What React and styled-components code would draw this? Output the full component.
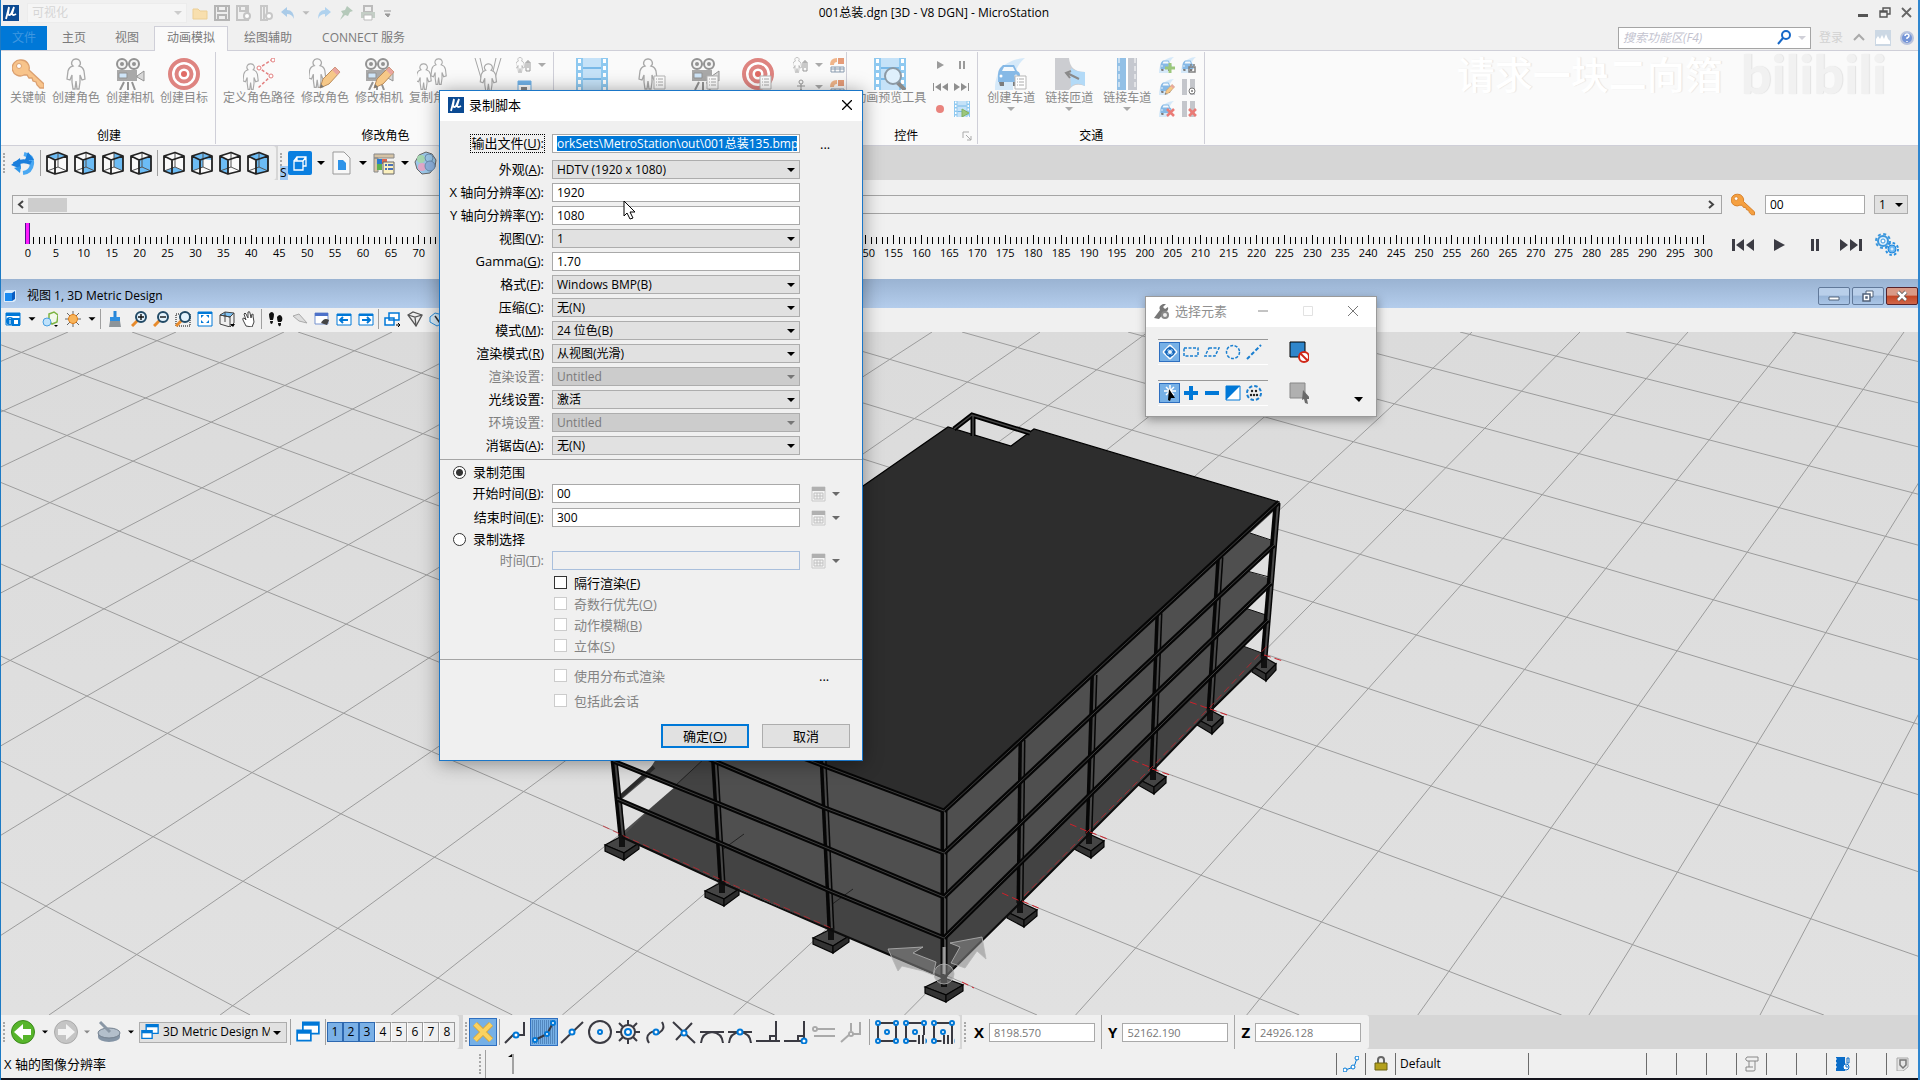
import { Fragment } from 'react'
import styled, { createGlobalStyle, css } from 'styled-components'

const GlobalStyle = createGlobalStyle`
  * {
    box-sizing: border-box;
  }

  body {
    background: #f0f0f0;
    color: #000;
    font-family: 'Open Sans', 'Noto Sans CJK SC', sans-serif;
    font-size: 12px;
    line-height: 16px;
    margin: 0;
  }

  button, input, select {
    color: inherit;
    font: inherit;
    margin: 0;
    padding: 0;
  }

  svg {
    display: block;
    flex: none;
  }
`

const BLUE = '#0078d7'

/* ---------- shared parts ---------- */

const Window = styled.div`
  border-left: 1px solid #1c7ac4;
  border-right: 2px solid #2f86cf;
  display: flex;
  flex-direction: column;
  min-height: 100vh;
  overflow: hidden;
  position: relative;
`

const ToolButton = styled.button`
  align-items: center;
  background: ${props => props.$active ? '#76b0e6' : 'none'};
  border: ${props => props.$active ? '1px solid #2e6fc0' : '0'};
  display: flex;
  flex: none;
  height: ${props => props.$h || 22}px;
  justify-content: center;
  width: ${props => props.$w || 22}px;
`

const Grip = styled.span`
  border-left: 2px dotted #a8a8a8;
  flex: none;
  height: ${props => props.$h || 20}px;
  margin: 0 2px;
  width: 2px;
`

const Rule = styled.span`
  background: #a0a0a0;
  flex: none;
  height: ${props => props.$h || 26}px;
  margin: 0 ${props => props.$gap || 2}px;
  width: 1px;
`

const Caret = ({ color = '#000', w = 16 }) => (
  <svg width={w} height='6' viewBox='0 0 16 6'><path d='M4 1h8l-4 4z' fill={color} /></svg>
)

const Icon = ({ w = 16, h, box, children }) => (
  <svg width={w} height={h || w} viewBox={box || `0 0 ${w} ${h || w}`} fill='none'>{children}</svg>
)

const dropArrow = css`
  &::after {
    border: 4px solid transparent;
    border-bottom: 0;
    border-top-color: ${props => props.$off ? '#777' : '#000'};
    content: '';
    pointer-events: none;
    position: absolute;
    right: 5px;
    top: 8px;
  }
`

const Drop = styled.div`
  ${dropArrow}
  display: flex;
  height: 19px;
  position: relative;

  select {
    appearance: none;
    background: ${props => props.$off ? '#cccccc' : '#e1e1e1'};
    border: 1px solid #adadad;
    border-radius: 0;
    color: ${props => props.$off ? '#7a7a7a' : '#000'};
    height: 19px;
    line-height: 16px;
    opacity: 1;
    padding: 0 16px 0 4px;
    width: 100%;
  }
`

const TextBox = styled.input`
  background: #fff;
  border: 1px solid #a9a9a9;
  height: 19px;
  min-width: 0;
  padding: 0 4px;

  &:disabled {
    background: #f0f0f0;
    border-color: #a9bfdc;
  }
`

/* ---------- icons ---------- */

const MuLogo = ({ size = 16 }) => (
  <Icon w={size} box='0 0 16 16'>
    <rect width='16' height='16' fill='#0b4a92' />
    <path d='M6 2 3 14M6 2 5 9q1 2 3 0l3-7-2 7q1 2 4 0' stroke='#fff' strokeWidth='1.8' />
  </Icon>
)

const personPath = 'M16 1a4 4 0 0 1 3 7q4 1 5 5l1 8-3 1-2-5v7l-1 7h-2l-1-8-1 8h-2l-1-7v-7l-2 5-3-1 1-8q1-4 5-5a4 4 0 0 1 3-7z'

const Person = ({ x = 0, y = 0, s = 1 }) => (
  <path d={personPath} transform={`translate(${x} ${y}) scale(${s})`} fill='#fafafa' stroke='#a9a9a9' strokeWidth='1.3' />
)

const Pencil = ({ x = 0, y = 0, s = 1 }) => (
  <g transform={`translate(${x} ${y}) scale(${s})`}>
    <path d='m2 22 3-9L17 1l5 5L11 18z' fill='#f6c888' stroke='#b98c5c' />
    <path d='m17 1 5 5-3 3-5-5z' fill='#e9a5a0' />
    <path d='m2 22 1-4 3 3z' fill='#777' />
  </g>
)

const CameraShape = () => (
  <g stroke='#939393' strokeWidth='2'>
    <circle cx='8' cy='6' r='5' fill='#f3f3f3' />
    <circle cx='20' cy='6' r='5' fill='#f3f3f3' />
    <circle cx='8' cy='6' r='1' /><circle cx='20' cy='6' r='1' />
    <path d='M3 12h20v11H3z' fill='#a9a9a9' stroke='none' />
    <path d='M5 15h8v5H5z' fill='#cfe5f8' strokeWidth='1' />
    <path d='m23 18 7-5v10l-7-4z' fill='#d8d8d8' strokeWidth='1' />
    <path d='m10 24-4 8M14 24v8M18 24l3 8' />
  </g>
)

const ListBadge = ({ x = 18, y = 18 }) => (
  <g transform={`translate(${x} ${y})`}>
    <path d='M0 0h11v13H0z' fill='#fff' stroke='#b5b5b5' />
    <path d='M2 3h1m1 0h5M2 6h1m1 0h5M2 9h1m1 0h5' stroke='#aaa' />
  </g>
)

const FilmShape = () => (
  <g>
    <path d='M0 0h32v32H0z' fill='#8fc9f0' />
    <path d='M7 0h18v32H7z' fill='#c5e2f8' />
    <path d='M7 10h18M7 21h18' stroke='#79b9e8' strokeWidth='2' />
    <path d='M2 1h3v4H2zm0 7h3v4H2zm0 7h3v4H2zm0 7h3v4H2zm0 7h3v3H2zM27 1h3v4h-3zm0 7h3v4h-3zm0 7h3v4h-3zm0 7h3v4h-3zm0 7h3v3h-3z' fill='#fff' />
  </g>
)

const CarShape = () => (
  <g>
    <path d='M0 32C0 14 8 2 30 0 20 8 18 20 18 32z' fill='#d5e9f9' />
    <path d='m5 10 3-3h11l3 6q3 1 3 4v7H3v-8q0-3 2-6z' fill='#86b9e6' />
    <path d='m7 13 2-4h9l2 4z' fill='#f4f9fd' />
    <path d='M4 24h5v4H5zm14 0h5l-1 4h-4z' fill='#7c7c7c' />
    <circle cx='6' cy='18' r='1.5' fill='#fff' /><circle cx='21' cy='18' r='1.5' fill='#fff' />
  </g>
)

const KeyShape = ({ fill = '#f8c48b', line = '#dba070' }) => (
  <g>
    <path d='M9 2a8 8 0 1 0 3 15l3 0 2 3 3 0 1 3 3 1 1 3 3 3h4v-4L17 12A8 8 0 0 0 9 2z' fill={fill} stroke={line} strokeWidth='1.3' />
    <circle cx='7' cy='8' r='2.5' fill='#fff' stroke={line} />
  </g>
)

const TargetShape = () => (
  <g>
    <circle cx='16' cy='16' r='14' fill='#fff' stroke='#de8480' strokeWidth='4' />
    <circle cx='16' cy='16' r='7.5' stroke='#de8480' strokeWidth='4' />
    <circle cx='16' cy='16' r='3' fill='#e06c66' />
  </g>
)

const RIBBON_ICONS = {
  key: <KeyShape />,
  person: <Person />,
  camera: <CameraShape />,
  target: <TargetShape />,
  path: (
    <>
      <Person x={-6} y={5} s={0.85} />
      <path d='m30 1-14 9 12 8-13 12' stroke='#e27f7f' strokeWidth='1.5' strokeDasharray='3 2' />
      <circle cx='30' cy='2' r='2' fill='#fff' stroke='#e27f7f' />
      <circle cx='16' cy='10' r='2' fill='#fff' stroke='#e27f7f' />
      <circle cx='28' cy='18' r='2' fill='#fff' stroke='#e27f7f' />
    </>
  ),
  personEdit: <><Person x={-7} s={0.95} /><Pencil x={9} y={8} /></>,
  cameraEdit: <><CameraShape /><Pencil x={9} y={8} /></>,
  copy: <><Person x={-7} y={5} s={0.85} /><Person x={8} s={0.85} /></>,
  puppet: <><path d='m3 0 6 20M8 0l4 18M29 0l-6 20M24 0l-4 18' stroke='#a5a5a5' /><Person y={5} s={0.9} x={2} /></>,
  film: <FilmShape />,
  personList: <><Person x={-4} /><ListBadge /></>,
  cameraList: <><CameraShape /><ListBadge /></>,
  targetList: <><TargetShape /><ListBadge /></>,
  preview: (
    <>
      <FilmShape />
      <path d='m23 24 8 8' stroke='#8b8b8b' strokeWidth='4' />
      <circle cx='19' cy='18' r='8' fill='#dff0fc' stroke='#8c9aa5' strokeWidth='2' />
    </>
  ),
  car: <><CarShape /><ListBadge x={20} y={18} /></>,
  ramp: (
    <>
      <path d='M2 0h14q1 14 16 14v14q-11-4-16 4H2z' fill='#cccdd1' />
      <path d='M32 14v14q-9-5-14 1-1-14 0-19 5 4 14 4z' fill='#b3daf7' />
      <path d='m26 21-12-6m4-2-5 2 4 5' stroke='#8a8a8a' strokeWidth='2' />
    </>
  ),
  road: (
    <>
      <path d='M6 0h20v32H6z' fill='#c5c8cf' />
      <path d='M6 0h10v32H6z' fill='#92c0e6' />
      <path d='M16 0v32' stroke='#fff' strokeWidth='2' /><path d='M8 0v32M24 0v32' stroke='#fff' strokeDasharray='5 3' />
    </>
  )
}

const half = shape => <g transform='scale(0.5)'>{shape}</g>

const SMALL_ICONS = {
  play: <path d='M5 4v8l7-4z' fill='#9b9b9b' />,
  pause: <path d='M5 4h2v8H5zm4 0h2v8H9z' fill='#9b9b9b' />,
  first: <path d='M1 4h1v8H1zm8 0v8L3 8zm7 0v8l-6-4z' fill='#8f8f8f' />,
  last: <path d='M15 4h-1v8h1zM7 4v8l6-4zM0 4v8l6-4z' fill='#8f8f8f' />,
  record: <circle cx='8' cy='8' r='4' fill='#e9837d' />,
  filmPlay: <>{half(<FilmShape />)}<path d='M8 8v8l7-4z' fill='#9cc77c' stroke='#82b060' /></>,
  carAdd: <>{half(<CarShape />)}<path d='M11 6v10M6 11h10' stroke='#9cc77c' strokeWidth='3' /></>,
  carCam: <>{half(<CarShape />)}<path d='M8 10h6v5H8zM9 8h2m1 0h2' stroke='#808080' strokeWidth='1.5' /></>,
  carEdit: <>{half(<CarShape />)}<Pencil x={5} y={5} s={0.48} /></>,
  carDel: <>{half(<CarShape />)}<path d='m8 8 7 7m0-7-7 7' stroke='#ea7b76' strokeWidth='2.5' /></>,
  roadEye: <><path d='M1 0h5v16H1zm8 0h5v16H9z' fill='#c4c6cb' /><circle cx='11' cy='12' r='3' fill='#fff' stroke='#777' /><circle cx='11' cy='12' r='1' fill='#777' /></>,
  roadDel: <><path d='M1 0h5v16H1zm8 0h5v16H9z' fill='#c4c6cb' /><path d='m8 8 7 7m0-7-7 7' stroke='#ea7b76' strokeWidth='2.5' /></>,
  clip: <><Person x={-4} s={0.5} /><path d='M10 5h4v9h-4zM12 3v8' stroke='#999' /></>,
  cal: <><path d='M2 2h13v12H2z' fill='#fff' stroke='#6fb0e6' /><path d='M2 2h13v4H2z' fill='#6fb0e6' /><path d='M5 8h6v5H5z' fill='#888' /></>,
  walk: <><circle cx='8' cy='3' r='2' stroke='#999' /><path d='M8 5v5l-3 5m3-5 3 5M4 7h8' stroke='#999' /></>,
  chart: <><path d='M1 8q0-7 7-7v4q-3 0-3 3z' fill='#f0b58a' /><path d='M9 1h6v6H9z' fill='#e59c79' /><path d='M2 10h13v5H2zM2 12h13M6 10v5M11 10v5' stroke='#8a9cb0' /></>
}

/* ---------- title bar ---------- */

const TitleBar = styled.header`
  align-items: center;
  display: grid;
  grid-template-columns: 16fr auto 17fr;
  height: 26px;
`

const QuickAccess = styled.div`
  align-items: center;
  display: flex;
  padding-left: 2px;
`

const Workflow = styled.div`
  ${dropArrow}
  margin: 0 2px 0 8px;
  position: relative;

  &::after {
    border-top-color: #ccc;
  }

  select {
    appearance: none;
    background: #f5f5f5;
    border: 1px solid #ececec;
    color: #d5d5d5;
    height: 20px;
    opacity: 1;
    padding: 0 4px;
    width: 160px;
  }
`

const WindowTitle = styled.h1`
  font-size: 12px;
  font-weight: 400;
  margin: 0;
`

const WindowControls = styled.div`
  display: flex;
  justify-content: flex-end;
`

const QUICK = [
  ['打开', <path key='a' d='M1 4h5l2 2h7v8H1z' fill='#f8dfae' stroke='#eccf95' />],
  ['保存', <path key='a' d='M1 1h14v14H1zM4 1v5h8V1M4 15v-5h8v5' fill='#eee' stroke='#b5b5b5' strokeWidth='2' />],
  ['保存设置', <g key='a' stroke='#c4c4c4' strokeWidth='2'><path d='M1 1h11v14H1zM4 1v5h6V1' /><circle cx='11' cy='11' r='3' fill='#fff' /></g>],
  ['压缩', <g key='a' stroke='#c8c8c8' strokeWidth='2'><path d='M3 1h6v14H3zM6 1v14' /><circle cx='11' cy='11' r='3' fill='#fff' /></g>],
  ['撤销', <path key='a' d='M1 7l6-5v3q7 0 7 9-2-5-7-5v3z' fill='#aacbe8' />],
  null,
  ['重做', <path key='a' d='M15 7 9 2v3q-7 0-7 9 2-5 7-5v3z' fill='#b0d2ee' />],
  ['固定', <path key='a' d='m9 1 6 5-3 1-2 4-3-1-5 5 3-6-2-3 4-1z' fill='#b5c9ba' />],
  ['打印', <g key='a'><path d='M4 1h8v6H4z' stroke='#bbb' strokeWidth='2' /><path d='M1 7h14v6H1z' fill='#c4cec6' /><path d='M4 10h8v5H4z' fill='#fff' stroke='#bbb' /></g>]
]

const AppTitleBar = () => (
  <TitleBar>
    <QuickAccess>
      <MuLogo />
      <Workflow>
        <select aria-label='工作流' defaultValue='可视化' disabled><option>可视化</option></select>
      </Workflow>
      {QUICK.map((item, i) => item
        ? <ToolButton key={i} aria-label={item[0]}><Icon>{item[1]}</Icon></ToolButton>
        : <Caret key={i} color='#bbb' w={14} />
      )}
      <Icon w={16}><path d='M5 6h7M6 9h5l-2 3z' stroke='#999' fill='#999' /></Icon>
    </QuickAccess>
    <WindowTitle>001总装.dgn [3D - V8 DGN] - MicroStation</WindowTitle>
    <WindowControls>
      <ToolButton aria-label='最小化'><Icon><path d='M3 9h10v3H3z' fill='#555' /></Icon></ToolButton>
      <ToolButton aria-label='还原'><Icon><path d='M3 6h7v6H3zM6 6V3h7v6h-3M3 7h7' stroke='#555' strokeWidth='1.4' /></Icon></ToolButton>
      <ToolButton aria-label='关闭'><Icon><path d='m3 3 9 9m0-9-9 9' stroke='#666' strokeWidth='1.8' /></Icon></ToolButton>
    </WindowControls>
  </TitleBar>
)

/* ---------- ribbon ---------- */

const TabBar = styled.nav`
  align-items: stretch;
  border-bottom: 1px solid #cfcfd8;
  display: flex;
  height: 25px;
`

const Tab = styled.a`
  background: ${props => props.$file ? BLUE : props.$on ? '#fafafa' : 'none'};
  border: 1px solid ${props => props.$on ? '#cfcfd8' : 'transparent'};
  border-bottom: 0;
  color: ${props => props.$file ? '#3f97e0' : '#7a7a7a'};
  height: ${props => props.$on ? 25 : 24}px;
  line-height: 22px;
  margin-right: ${props => props.$after || 0}px;
  padding: 0 ${props => props.$pad || 12}px;
  text-decoration: none;
`

const TabTools = styled.div`
  align-items: center;
  display: flex;
  margin-left: auto;
`

const Search = styled.div`
  align-items: center;
  background: #fff;
  border: 1px solid #a5a5a5;
  display: flex;
  height: 22px;
  margin-right: 8px;
  width: 193px;

  input {
    background: none;
    border: 0;
    flex: 1;
    font-style: italic;
    min-width: 0;
    padding-left: 4px;
  }

  input::placeholder {
    color: #c3c3cf;
  }
`

const SignIn = styled.a`
  color: #d2d2d2;
  margin-right: 5px;
  text-decoration: none;
`

const Panels = styled.section`
  background: #fafafa;
  border-bottom: 1px solid #cfcfd8;
  display: flex;
  height: 95px;
`

const Group = styled.div`
  border-right: 1px solid #cfcfd8;
  display: flex;
  flex: none;
  flex-direction: column;
  justify-content: space-between;
  margin: 1px 0;
  padding: ${props => props.$pad || '6px 4px 0 6px'};
`

const GroupFooter = styled.footer`
  align-items: center;
  display: flex;

  h2 {
    flex: 1;
    font-size: 12px;
    font-weight: 400;
    margin: 0;
    text-align: center;
  }
`

const GroupBody = styled.div`
  display: flex;
`

const BigButton = styled.button`
  align-items: center;
  background: none;
  border: 0;
  color: #8a8a8a;
  display: flex;
  flex-direction: column;
  min-width: ${props => props.$w || 42}px;
  padding: 0 ${props => props.$pad || 3}px;
  white-space: nowrap;
`

const SmallGrid = styled.div`
  align-content: start;
  display: grid;
  grid-template-columns: repeat(${props => props.$cols || 2}, ${props => props.$tight ? 18 : 22}px);
  grid-template-rows: repeat(3, 22px);
  justify-items: center;
  margin-top: -4px;
`

const Big = ({ icon, label, w, pad, menu }) => (
  <BigButton $w={w} $pad={pad} aria-label={label ? undefined : icon}>
    <Icon w={32}>{RIBBON_ICONS[icon]}</Icon>
    {label && <span>{label}</span>}
    {menu && <Caret color='#aaa' />}
  </BigButton>
)

const Smalls = ({ icons, cols, tight }) => (
  <SmallGrid $cols={cols} $tight={tight}>
    {icons.map((name, i) => name === 'caret'
      ? <ToolButton key={i} $w={18} aria-label='更多'><Caret color='#aaa' /></ToolButton>
      : <ToolButton key={i} $w={18} aria-label={name}><Icon>{SMALL_ICONS[name]}</Icon></ToolButton>
    )}
  </SmallGrid>
)

const Ribbon = () => (
  <>
    <TabBar>
      <Tab href='#file' $file $pad={10}>文件</Tab>
      <Tab href='#home' $pad={14} $after={1}>主页</Tab>
      <Tab href='#view' $pad={12} $after={2}>视图</Tab>
      <Tab href='#animate' $on>动画模拟</Tab>
      <Tab href='#aids' $pad={15}>绘图辅助</Tab>
      <Tab href='#connect' $pad={13}>CONNECT 服务</Tab>
      <TabTools>
        <Search>
          <input aria-label='搜索功能区' placeholder='搜索功能区(F4)' />
          <Icon w={20} h={18}><circle cx='12' cy='6' r='4' stroke='#1668c8' strokeWidth='2' /><path d='m9 9-5 6' stroke='#1668c8' strokeWidth='2' /></Icon>
          <Caret color='#d0d0d8' w={16} />
        </Search>
        <SignIn href='#signin'>登录</SignIn>
        <Icon w={22} h={16}><path d='m6 10 5-5 5 5' stroke='#aaa' strokeWidth='2' /></Icon>
        <ToolButton aria-label='社区' $w={26} $h={22}>
          <Icon w={16}><rect width='16' height='16' fill='#ccd8e4' /><path d='M1 14V9l2-3 2 3 2-4 2 4 2-5 2 5 2 2v3z' fill='#fff' /></Icon>
        </ToolButton>
        <ToolButton aria-label='帮助' $w={22}>
          <Icon w={14}><circle cx='7' cy='7' r='6' fill='#7595d8' stroke='#b8c3dd' strokeWidth='2' /><path d='M5 5q0-2 2-2t2 2q0 1-2 2v1m0 2v1' stroke='#fff' strokeWidth='1.5' /></Icon>
        </ToolButton>
      </TabTools>
    </TabBar>
    <Panels>
      <Group>
        <GroupBody>
          <Big icon='key' label='关键帧' />
          <Big icon='person' label='创建角色' />
          <Big icon='camera' label='创建相机' />
          <Big icon='target' label='创建目标' />
        </GroupBody>
        <GroupFooter><h2>创建</h2></GroupFooter>
      </Group>
      <Group $pad='6px 2px 0 4px'>
        <GroupBody>
          <Big icon='path' label='定义角色路径' />
          <Big icon='personEdit' label='修改角色' />
          <Big icon='cameraEdit' label='修改相机' />
          <Big icon='copy' label='复制角色' />
          <Big icon='puppet' w={55} />
          <Smalls icons={['clip', 'caret', 'cal']} tight />
        </GroupBody>
        <GroupFooter><h2>修改角色</h2></GroupFooter>
      </Group>
      <Group $pad='6px 0 0 12px'>
        <GroupBody>
          <Big icon='film' w={52} />
          <Big icon='personList' w={68} />
          <Big icon='cameraList' w={38} />
          <Big icon='targetList' w={68} />
          <Smalls icons={['clip', 'caret', 'chart', 'walk', 'caret', 'chart']} cols={3} tight />
        </GroupBody>
      </Group>
      <Group $pad='6px 4px 0 4px'>
        <GroupBody>
          <Big icon='preview' label='动画预览工具' />
          <Smalls icons={['play', 'pause', 'first', 'last', 'record', 'filmPlay']} />
        </GroupBody>
        <GroupFooter>
          <h2>控件</h2>
          <Icon w={12}><path d='M2 8V2h6M5 5l5 5m0-4v4H6' stroke='#aaa' /></Icon>
        </GroupFooter>
      </Group>
      <Group $pad='6px 4px 0 4px'>
        <GroupBody>
          <Big icon='car' label='创建车道' pad={5} menu />
          <Big icon='ramp' label='链接匝道' pad={5} menu />
          <Big icon='road' label='链接车道' pad={5} menu />
          <Smalls icons={['carAdd', 'carCam', 'carEdit', 'roadEye', 'carDel', 'roadDel']} />
        </GroupBody>
        <GroupFooter><h2>交通</h2></GroupFooter>
      </Group>
    </Panels>
  </>
)

const Watermark = styled.div`
  align-items: center;
  color: #fff;
  display: flex;
  font-size: 38px;
  font-weight: 500;
  gap: 18px;
  line-height: 48px;
  pointer-events: none;
  position: absolute;
  right: 32px;
  text-shadow: 1px 0 1px #e2e2e2;
  top: 50px;

  b {
    color: #f1f1f1;
    font-family: Lato, sans-serif;
    font-size: 54px;
    font-weight: 900;
  }
`

/* ---------- view attribute strip ---------- */

const Band = styled.div`
  background: #d6d6d6;
  display: flex;
  height: 34px;
`

const Strip = styled.div`
  align-items: center;
  background: #f0f0f0;
  border-radius: 0 3px 3px 0;
  display: flex;
  flex: none;
  height: 100%;
  margin-right: ${props => props.$after || 2}px;
  padding-right: ${props => props.$end || 2}px;
`

const CUBE_FACES = [
  'M2 5 9 8l13-3-9-3z', 'M10 9 22 6v14l-12 3z', 'M13 2l9 3v15l-9-4z', 'M10 9l12-4v15l-12 3z',
  'M2 20 13 16l9 4-12 3z', 'M2 5 13 2v14L2 20zM13 2l9 3v4l-9-1z', 'M2 5l8 4v14l-8-3z', 'M2 5 13 2l9 3v15l-12 3V9z'
]

const Cube = ({ face }) => (
  <Icon w={24}>
    <path d='M2 5 13 1.5l9 3.5v15l-12 3-8-3z' fill='#fafafa' />
    <path d={face} fill='#6cbcf5' />
    <path d='M2 20 13 16l9 4M13 2v14' stroke='#555' />
    <path d='M2 5 13 1.5l9 3.5v15l-12 3-8-3zM2 5l8 4 12-4M10 9v14' stroke='#222' strokeWidth='1.8' strokeLinejoin='round' />
  </Icon>
)

const SmallTag = styled.span`
  align-self: flex-end;
  background: #9fc8f2;
  font-size: 12px;
  line-height: 14px;
  margin-left: -4px;
  width: 8px;
`

const AttributeStrip = () => (
  <Band>
    <Strip $end={4}>
      <Grip />
      <ToolButton aria-label='旋转' $w={31}>
        <Icon w={24}>
          <path d='M13 3q9 2 8 10-1 8-9 9' stroke='#4aa8f2' strokeWidth='4' />
          <path d='M3 13q9-5 17-1' stroke='#1b7fdc' strokeWidth='4' />
          <path d='m0 14 9-7 1 11zM14 9l3-8 6 8z' fill='#1b7fdc' />
          <path d='m3 17 7-2-1 7z' fill='#2f97ea' />
        </Icon>
      </ToolButton>
      <Rule />
      {CUBE_FACES.map((face, i) => (
        <Fragment key={face}>
          {i === 4 && <Rule />}
          <ToolButton $w={28} $h={28} aria-label={`视图 ${i + 1}`}><Cube face={face} /></ToolButton>
        </Fragment>
      ))}
    </Strip>
    <Strip>
      <Grip />
      <SmallTag>S</SmallTag>
      <Icon w={24}><rect width='24' height='24' rx='2' fill='#0a7fe0' /><path d='M6 10h9v9H6zM9 10V6h9v9h-3M15 10l3-4M6 10l3-4' stroke='#fff' strokeWidth='1.3' /></Icon>
      <Caret w={18} />
      <Icon w={24}><path d='M3 1h11l6 6v16H3z' fill='#f8f8f8' stroke='#999' /><path d='M8 9h5l3 3v7H8z' fill='#2e93e8' /></Icon>
      <Caret w={18} />
      <Icon w={24}><path d='M2 3h20v4H2zM2 7h4v14H2z' fill='#d5c3a5' stroke='#888' /><path d='M5 8h5v5H5z' fill='#2b7bd0' /><path d='M5 13h5v6H5z' fill='#5db04e' /><path d='M10 8h5v5h-5z' fill='#e1674c' /><path d='M11 11h11v12H11z' fill='#fbf0be' stroke='#666' /><path d='M13 14h2m1 0h5m-8 4h2m1 0h5' stroke='#4970b8' strokeWidth='2' /></Icon>
      <Caret w={18} />
      <Icon w={24}>
        <path d='m12 1 6 2 4 6-1 7-5 6-8 1-5-5-2-7 4-7z' fill='#9cc8ea' stroke='#666' />
        <circle cx='7' cy='8' r='4' fill='#a6d7b1' /><circle cx='15' cy='7' r='4' fill='#9cc8ea' stroke='#6c8eb0' />
        <circle cx='8' cy='16' r='4' fill='#e2a8c9' /><circle cx='16' cy='15' r='5' fill='#8fb3e0' stroke='#6c8eb0' />
      </Icon>
    </Strip>
  </Band>
)

/* ---------- timeline ---------- */

const Timeline = styled.section`
  background: #f0f0f0;
  display: flex;
  height: 99px;
  padding-top: 15px;
`

const Track = styled.div`
  flex: 1;
  margin-left: 11px;
`

const ScrollBar = styled.div`
  align-items: center;
  border: 1px solid #a5a5a5;
  display: flex;
  height: 19px;
  justify-content: space-between;
`

const Thumb = styled.span`
  background: #cdcdcd;
  height: 14px;
  margin-right: auto;
  width: 39px;
`

const Ruler = styled.div`
  display: flex;
  margin: 21px 5px 0 2px;
`

const RulerCell = styled.div`
  display: flex;
  flex: 1 1 0;
  flex-direction: column;
  min-width: 0;
  position: relative;
`

const Ticks = styled.div`
  align-items: flex-end;
  display: flex;
  height: 9px;
`

const Tick = styled.i`
  display: flex;
  flex: 1 1 0;
  justify-content: center;
  visibility: ${props => props.$hide ? 'hidden' : 'visible'};

  &::before {
    background: #000;
    content: '';
    height: ${props => props.$major ? 9 : 7}px;
    width: 1px;
  }
`

const TickLabel = styled.span`
  align-self: center;
  font-size: 11px;
  line-height: 18px;
  white-space: nowrap;
`

const Playhead = styled.span`
  align-self: center;
  background: #ff1cff;
  border: solid #50108c;
  border-width: 0 1px;
  bottom: 18px;
  height: 21px;
  position: absolute;
  width: 5px;
`

const Player = styled.div`
  width: 196px;
`

const PlayerRow = styled.div`
  align-items: center;
  display: flex;
  height: ${props => props.$h}px;
  margin-top: ${props => props.$top || 0}px;
  padding-left: ${props => props.$left || 0}px;
`

const FrameBox = styled(TextBox)`
  margin: 0 9px;
  width: 100px;
`

const SpeedDrop = styled(Drop)`
  width: 34px;
`

const marks = Array.from({ length: 61 }, (_, i) => i * 5)

const AnimationTimeline = () => (
  <Timeline>
    <Track>
      <ScrollBar>
        <Icon w={15} h={15}><path d='M10 4 6 7.5l4 3.5' stroke='#444' strokeWidth='2' /></Icon>
        <Thumb />
        <Icon w={18} h={15}><path d='m6 4 4 3.5L6 11' stroke='#444' strokeWidth='2' /></Icon>
      </ScrollBar>
      <Ruler>
        {marks.map(mark => (
          <RulerCell key={mark}>
            {mark === 0 && <Playhead />}
            <Ticks>
              {[-2, -1, 0, 1, 2].map(n => <Tick key={n} $major={n === 0} $hide={mark + n < 0 || mark + n > 300} />)}
            </Ticks>
            <TickLabel>{mark}</TickLabel>
          </RulerCell>
        ))}
      </Ruler>
    </Track>
    <Player>
      <PlayerRow $h={19} $left={8}>
        <ToolButton aria-label='关键帧' $w={26}><Icon w={25} box='0 0 34 32'><KeyShape fill='#f5a040' line='#d67f28' /></Icon></ToolButton>
        <FrameBox aria-label='帧' defaultValue='00' />
        <SpeedDrop><select aria-label='速度'><option>1</option></select></SpeedDrop>
      </PlayerRow>
      <PlayerRow $h={24} $top={19} $left={3}>
        <ToolButton aria-label='首帧' $w={36}><Icon w={22} h={12}><path d='M0 0h3v12H0zm12 0v12L4 6zm10 0v12l-8-6z' fill='#3c3c44' /></Icon></ToolButton>
        <ToolButton aria-label='播放' $w={36}><Icon w={12}><path d='M1 0v12l11-6z' fill='#3c3c44' /></Icon></ToolButton>
        <ToolButton aria-label='暂停' $w={36}><Icon w={12}><path d='M2 0h3v12H2zm5 0h3v12H7z' fill='#3c3c44' /></Icon></ToolButton>
        <ToolButton aria-label='末帧' $w={36}><Icon w={22} h={12}><path d='M22 0h-3v12h3zM10 0v12l8-6zM0 0v12l8-6z' fill='#3c3c44' /></Icon></ToolButton>
        <ToolButton aria-label='设置' $w={36}>
          <Icon w={24}>
            <circle cx='8' cy='8' r='5' fill='#d8ecfb' stroke='#3c97dd' strokeWidth='2' />
            <circle cx='8' cy='8' r='7' stroke='#3c97dd' strokeWidth='2' strokeDasharray='3 2.5' />
            <circle cx='8' cy='8' r='2' fill='#fff' stroke='#3c97dd' />
            <circle cx='17' cy='16' r='4' fill='#6bb5f0' stroke='#1d86dc' />
            <circle cx='17' cy='16' r='6' stroke='#2a8fe0' strokeWidth='2' strokeDasharray='2.5 2.2' />
            <circle cx='17' cy='16' r='1.5' fill='#d8ecfb' />
          </Icon>
        </ToolButton>
      </PlayerRow>
    </Player>
  </Timeline>
)

/* ---------- view window ---------- */

const ViewTitle = styled.div`
  align-items: center;
  background: linear-gradient(#9ab3d2, #b4cdec);
  display: flex;
  gap: 10px;
  height: 29px;
  padding: 5px 0 0 2px;

  h2 {
    flex: 1;
    font-size: 12px;
    font-weight: 400;
    margin: 0;
  }
`

const MdiButtons = styled.div`
  display: flex;
  gap: 2px;
`

const MdiButton = styled.button`
  align-items: center;
  background: ${props => props.$close ? 'linear-gradient(#d99a87 45%, #c44524 50%, #d0664a)' : 'linear-gradient(#b9cfea 45%, #98b5d8 50%, #aac5e6)'};
  border: 1px solid ${props => props.$close ? '#57222a' : '#61799a'};
  border-radius: 2px;
  display: flex;
  height: 18px;
  justify-content: center;
  width: 32px;
`

const ViewTools = styled.div`
  align-items: center;
  background: #f0f0f0;
  display: flex;
  height: 24px;
  padding-bottom: 2px;
`

const Lens = ({ sign, dashed }) => (
  <>
    {dashed && <path d='M1 3h14v12H1z' stroke='#000' strokeDasharray='1 1' />}
    <path d='m7 9-6 6' stroke='#e88b2c' strokeWidth='3' />
    <circle cx='10' cy='6' r='5' fill='#e4f3fd' stroke='#224a66' strokeWidth='2' />
    {sign && <path d={sign} stroke='#111' strokeWidth='1.4' />}
  </>
)

const VIEW_TOOLS = [
  [<g key='i'><path d='M1 2h14v12H1z' fill='#fff' stroke={BLUE} /><path d='M1 2h14v3H1z' fill={BLUE} /><path d='M8 8h6v6H8z' stroke={BLUE} strokeWidth='2' /><circle cx='5' cy='10' r='4' fill={BLUE} /><path d='M5 9v4M5 7v1' stroke='#fff' /></g>, 24],
  'caret',
  [<g key='i'><path d='m7 3 5-2 4 3-1 7-5 2-3-3z' fill='#f1f8ea' stroke='#7cb342' strokeWidth='1.5' /><circle cx='5' cy='11' r='4' fill='#bfe2fb' stroke='#4a9fe0' /><path d='M12 14h4l-2 2z' fill='#000' /></g>, 22],
  [<g key='i'><path d='M8 0v16M0 8h16M2 2l12 12M14 2 2 14' stroke='#666' /><circle cx='8' cy='8' r='4.5' fill='#f8b45a' stroke='#e07f1c' /></g>, 24],
  'caret',
  'rule',
  [<g key='i'><path d='M8 0v6' stroke='#2585d8' strokeWidth='3' /><path d='M3 6h10v4H3z' fill='#2f8fe0' /><path d='M3 10h10l1 6H2z' fill='#8d9499' /></g>, 26],
  [<Lens key='i' sign='M7 6h6M10 3v6' />, 22],
  [<Lens key='i' sign='M7 6h6' />, 22],
  [<Lens key='i' dashed />, 22],
  [<g key='i'><path d='M1 1h14v14H1z' fill='#fff' stroke={BLUE} /><path d='M1 1h14v2H1zM4 7V4h3zM9 4h3v3zM12 9v3H9zM7 12H4V9z' fill={BLUE} /></g>, 22],
  [<g key='i' stroke='#444'><path d='M1 4 6 1l9 1-4 4z' fill='#7cc0f2' /><path d='M1 4v9l10 3V6zM11 16l4-4V2M6 1v10' /><path d='M11 13h5l-2 3z' fill='#000' stroke='none' /></g>, 22],
  [<path key='i' d='M5 15 2 9q-1-2 1-2l2 2-2-6q1-2 2 0l2 4V1q2-1 2 1l1 5 1-4q2 0 1 2l1 6-2 5z' fill='#fff' stroke='#444' />, 22],
  'rule',
  [<path key='i' d='M1 3q3-4 5 0 0 3-1 6H2q-1-3-1-6zm1 7h3q0 3-2 3-1-1-1-3zM9 6q3-4 5 0 1 3-1 5h-3Q9 9 9 6zm1 6h3q0 4-2 3-1 0-1-3z' fill='#111' />, 26],
  [<path key='i' d='m1 5 6-2 8 9-8-2z' fill='#ddd' stroke='#aaa' />, 22],
  [<g key='i'><path d='M1 2h13v11H1z' fill='#fff' stroke='#7693cf' /><path d='M1 2h13v3H1z' fill='#4d71c9' /><path d='M7 12q3-6 8-3l-2 5z' fill='#444' /></g>, 22],
  [<g key='i'><path d='M1 3h14v11H1z' fill='#fff' stroke={BLUE} /><path d='M1 3h14v2H1z' fill={BLUE} /><path d='M12 9H4m3-3L4 9l3 3' stroke={BLUE} strokeWidth='2' /></g>, 22],
  [<g key='i'><path d='M1 3h14v11H1z' fill='#fff' stroke={BLUE} /><path d='M1 3h14v2H1z' fill={BLUE} /><path d='M4 9h8M9 6l3 3-3 3' stroke={BLUE} strokeWidth='2' /></g>, 22],
  'rule',
  [<g key='i'><path d='M5 2h10v7H5zM1 7h9v7H1z' fill='#fff' stroke={BLUE} strokeWidth='1.5' /><path d='M12 14h4m-2-2 2 2-2 2' stroke='#000' /></g>, 24],
  [<g key='i' stroke='#555' strokeWidth='1.3'><path d='M1 4 6 1l9 3-6 11z' fill='#eee' /><path d='m1 4 7 2 7-2M8 6l1 9' /></g>, 22],
  [<g key='i'><path d='m1 6 5-4 8 2v8l-6 3-7-4z' fill='#dceffc' stroke='#2b8fdc' /><path d='m6 5 7 10' stroke='#333' strokeWidth='1.5' /></g>, 22]
]

const Canvas = styled.svg`
  background: linear-gradient(#dbdbdb, #e1e1e1);
  flex: 1;
  height: 0;
  min-height: 400px;
  width: 100%;
`

const footings = [
  [622, 836, 17], [722, 882, 17], [831, 929, 18], [944, 978, 19],
  [1022, 903, 15], [1089, 834, 15], [1152, 770, 14], [1210, 710, 13], [1264, 657, 12]
]

const rightColumns = [
  [944, 811, 944, 977], [1022, 740, 1020, 903], [1094, 675, 1089, 834],
  [1159, 613, 1153, 770], [1220, 557, 1210, 711], [1277, 504, 1264, 658]
]

const leftColumns = [[613, 750, 622, 837], [714, 750, 722, 883], [823, 758, 831, 930]]

const beams = [
  'M944 811 1279 502', 'M944 853 1274 545', 'M944 897 1271 583', 'M944 938 1268 620',
  'M944 811 790 753', 'M944 853 825 808 714 761 690 750', 'M944 897 827 848 717 803 613 761',
  'M944 938 830 891 720 843 617 799'
]

const openings = [
  'M1250 533 1276 509 1273 541z', 'M1247 571 1272 549 1269 578z',
  'M1245 608 1269 586 1266 615z', 'M1243 646 1265 624 1262 653z',
  'M613 740h55l-22 35-27 22z', 'M622 799l26-22 28 9-52 45z'
]

const Footing = ({ x, y, r }) => (
  <g stroke='#050505' strokeWidth='1.2'>
    <path d={`M${x - r} ${y + 9}l${r} -9l${r} 7l${-r + 2} 10z`} fill='#454545' />
    <path d={`M${x - r} ${y + 9}l${r + 2} 8v7l${-r - 2} -9z`} fill='#333' />
    <path d={`M${x + 2} ${y + 17}l${r - 2} -10v6l${-r + 2} 11z`} fill='#2b2b2b' />
  </g>
)

const Model = () => (
  <Canvas viewBox='1 332 1917 683' preserveAspectRatio='xMidYMid slice'>
    <g stroke='#9c9c9c' strokeWidth='1'>
      {Array.from({ length: 23 }, (_, i) => i - 6).map(k => (
        <line key={k} x1={-532 + 166 * k} y1='332' x2={1037 + 262.3 * k} y2='1015' />
      ))}
      {Array.from({ length: 23 }, (_, j) => j - 1).map(j => (
        <line key={j} x1={68 + 108 * j} y1='332' x2={49 + 171.1 * (j - 9)} y2='1015' />
      ))}
    </g>

    {footings.map(([x, y, r]) => <Footing key={x} x={x} y={y} r={r} />)}

    <path d='M613 700 800 700 944 811 1279 502 1264 658 944 979 622 838z' fill='#4f4f4f' />
    <path d='M622 837 676 784 707 757 714 757 720 843 830 891 944 938 1266 621 1264 658 944 979z' fill='#434343' />
    <path d='m676 785 30-28M676 784l-55 47M722 850l22-16M831 905l22-16' stroke='#222' />
    {openings.map(d => <path key={d} d={d} fill='#dfdfdf' />)}
    <path d='m619 798 35-31' stroke='#2b2b2b' strokeWidth='4' />
    <path d='m1250 533 24 8M1247 571l22 6M1245 608l21 7M1243 646l19 7' stroke='#111' />

    <path d='M560 692 790 753 944 811 1279 502 1034 429 1011 446 948 427 863 486 600 668z' fill='#2d2d2d' stroke='#000' strokeWidth='1.2' />
    <g fill='none'>
      <path d='M954 429 972 415 1030 433M973 415v21' stroke='#000' strokeWidth='5' />
      <path d='M954 429 972 415 1030 433M973 415v21' stroke='#444' strokeWidth='1.5' />
    </g>

    {[...leftColumns, ...rightColumns].map(([x1, y1, x2, y2]) => (
      <g key={x1}>
        <line x1={x1} y1={y1} x2={x2} y2={y2} stroke='#060606' strokeWidth='7' />
        <line x1={x1 + 1} y1={y1} x2={x2 + 1} y2={y2} stroke='#484848' strokeWidth='2' />
        <path d={`M${x2} ${y2 - 2}v12`} stroke='#111' strokeWidth='6' />
      </g>
    ))}
    {beams.map(d => (
      <g key={d} fill='none'>
        <path d={d} stroke='#060606' strokeWidth='5' />
        <path d={d} stroke='#3d3d3d' strokeWidth='1' />
      </g>
    ))}
    <path d='M622 837 722 883 831 930 944 978 1020 903 1089 834 1153 770 1210 711 1264 658' stroke='#0c0c0c' strokeWidth='2' fill='none' />
    <g stroke='#d0202a' strokeDasharray='7 4' fill='none'>
      <path d='M603 826 622 835 722 880 831 928M1024 896 1088 831 1153 766 1210 707 1268 645' strokeOpacity='.7' />
      <path d='m962 982 12 6M1022 901l19 8M1002 893l18 8M1090 832l20 8M1070 824l19 8M1152 769l21 7M1132 760l20 8M1210 709l20 7M1190 702l20 7M1264 655l19 6' />
    </g>

    <g fill='#8a8a8a' fillOpacity='.55' stroke='#b5b5b5' strokeOpacity='.8'>
      <path d='m888 949 35-2-10 6 23 9-3 13-10-4-21-5-4 5z' />
      <path d='m950 943 32-6 4 22-9-8-12 17-14-5 9-16z' />
      <circle cx='944' cy='974' r='10' /><path d='M944 947v27' strokeWidth='3' />
    </g>
  </Canvas>
)

const ViewWindow = () => (
  <>
    <ViewTitle>
      <Icon w={14}><path d='M3 1h10v10l-2 2H1V3z' fill='#dcecfb' /><path d='M2 4h7v8H2z' fill='#1b8af0' /><path d='m9 4 3-2v8l-3 2z' fill='#0a5cc0' /></Icon>
      <h2>视图 1, 3D Metric Design</h2>
      <MdiButtons>
        <MdiButton aria-label='最小化视图'><Icon w={12}><path d='M1 7h10v3H1z' fill='#fff' stroke='#51627a' /></Icon></MdiButton>
        <MdiButton aria-label='还原视图'><Icon w={12}><path d='M4 1h7v6H4z' fill='#fff' stroke='#51627a' /><path d='M1 4h7v7H1zM4 7h1v1H4z' fill='#fff' stroke='#51627a' strokeWidth='1.5' /></Icon></MdiButton>
        <MdiButton aria-label='关闭视图' $close><Icon w={12}><path d='m2 2 8 8m0-8-8 8' stroke='#555' strokeWidth='4' /><path d='m2 2 8 8m0-8-8 8' stroke='#fff' strokeWidth='2.5' /></Icon></MdiButton>
      </MdiButtons>
    </ViewTitle>
    <ViewTools>
      {VIEW_TOOLS.map((tool, i) => {
        if (tool === 'rule') return <Rule key={i} $h={20} $gap={1} />
        if (tool === 'caret') return <Caret key={i} w={14} />
        return <ToolButton key={i} $w={tool[1]} aria-label={`视图工具 ${i + 1}`}><Icon>{tool[0]}</Icon></ToolButton>
      })}
    </ViewTools>
    <Model />
  </>
)

/* ---------- element selection palette ---------- */

const Palette = styled.section`
  background: #f0f0f0;
  border: 1px solid #9a9a9a;
  box-shadow: 1px 3px 9px rgba(0, 0, 0, 0.35);
  height: 121px;
  left: 1144px;
  position: absolute;
  top: 296px;
  width: 232px;
`

const PaletteTitle = styled.header`
  align-items: center;
  background: #fff;
  color: #909090;
  display: flex;
  font-size: 13px;
  height: 30px;
  padding: 0 0 2px 6px;

  span {
    flex: 1;
    padding-left: 5px;
  }
`

const PaletteBody = styled.div`
  display: grid;
  gap: 15px 15px;
  grid-template-columns: 110px 30px 1fr;
  padding: 12px 11px 12px 12px;

  > svg:last-child {
    justify-self: end;
  }
`

const PaletteRow = styled.div`
  align-items: center;
  border-bottom: 1px solid #fff;
  border-top: 1px solid #999;
  display: flex;
  height: 26px;
  padding-left: 1px;
`

const PALETTE = [
  [
    <g key='a'><path d='M8 0v16M0 8h16' stroke='#1766b8' strokeWidth='1.5' /><path d='m8 1 7 7-7 7-7-7z' stroke='#fff' strokeWidth='1.5' /><circle cx='8' cy='8' r='4' stroke='#1766b8' strokeWidth='1.5' /><path d='M6 8h4M8 6v4' stroke='#fff' strokeWidth='1.5' /></g>,
    <path key='a' d='M1 4h14v8H1z' stroke='#1a7fd0' strokeDasharray='3 1.5' strokeWidth='1.5' />,
    <path key='a' d='M5 4h10l-4 8H1z' stroke='#1a7fd0' strokeDasharray='3 1.5' strokeWidth='1.5' />,
    <circle key='a' cx='8' cy='8' r='6.5' stroke='#1a7fd0' strokeDasharray='3 1.5' strokeWidth='1.5' />,
    <path key='a' d='M1 15 15 1' stroke='#1a7fd0' strokeDasharray='4 2' strokeWidth='2' />
  ],
  [
    <g key='a'><path d='M8 0v12M2 6h12M4 2l8 8m0-8-8 8' stroke='#fff' strokeWidth='1.5' /><path d='m7 4 6 9H9l-1 3-2-1z' fill='#000' /></g>,
    <path key='a' d='M8 1v14M1 8h14' stroke={BLUE} strokeWidth='4' />,
    <path key='a' d='M1 8h14' stroke={BLUE} strokeWidth='4' />,
    <g key='a'><path d='M1 1h14v14H1z' fill='#fff' stroke={BLUE} /><path d='M1 15V1h14z' fill={BLUE} /></g>,
    <g key='a'><circle cx='8' cy='8' r='7' stroke='#1a7fd0' strokeDasharray='3.5 2' strokeWidth='2' /><circle cx='6' cy='6' r='1.2' fill='#222' /><circle cx='10' cy='6' r='1.2' fill='#222' /><circle cx='5' cy='10' r='1.2' fill='#222' /><circle cx='8' cy='10' r='1.2' fill='#222' /><circle cx='11' cy='10' r='1.2' fill='#222' /></g>
  ]
]

const SelectPalette = () => (
  <Palette>
    <PaletteTitle>
      <Icon w={18}><path d='m2 16 6-8q-2-4 3-6l3 0-3 3 2 2 3-2q1 4-3 5l-6 7z' fill='#777' /><circle cx='13' cy='13' r='3' fill='#eee' stroke='#888' strokeWidth='2' /></Icon>
      <span>选择元素</span>
      <ToolButton aria-label='最小化' $w={45}><Icon w={12}><path d='M1 6h10' stroke='#888' /></Icon></ToolButton>
      <ToolButton aria-label='最大化' $w={45}><Icon w={10}><path d='M.5.5h9v9h-9z' stroke='#e2e2e2' /></Icon></ToolButton>
      <ToolButton aria-label='关闭' $w={46}><Icon w={12}><path d='m1 1 10 10m0-10L1 11' stroke='#777' /></Icon></ToolButton>
    </PaletteTitle>
    <PaletteBody>
      <PaletteRow>{PALETTE[0].map((p, i) => <ToolButton key={i} $w={21} $h={20} $active={i === 0} aria-label={`方法 ${i + 1}`}><Icon>{p}</Icon></ToolButton>)}</PaletteRow>
      <Icon w={26} box='-6 -1 26 26'><path d='M1 2h15v15H1z' fill='#2f86cb' stroke='#000' /><circle cx='15' cy='17' r='5' fill='#fff' stroke='#d02818' strokeWidth='2' /><path d='m11 13 8 8' stroke='#d02818' strokeWidth='2' /></Icon>
      <span />
      <PaletteRow>{PALETTE[1].map((p, i) => <ToolButton key={i} $w={21} $h={20} $active={i === 0} aria-label={`模式 ${i + 1}`}><Icon>{p}</Icon></ToolButton>)}</PaletteRow>
      <Icon w={26} box='-6 -1 26 26'><path d='M1 2h15v15H1z' fill='#b0b0b0' stroke='#888' /><path d='m14 9 8 9h-4l1 5-3-1-1-4-2 1z' fill='#6a6a6a' /></Icon>
      <Icon w={14} h={26}><path d='M3 17h9l-4 5z' fill='#000' /></Icon>
    </PaletteBody>
  </Palette>
)

/* ---------- record script dialog ---------- */

const Dialog = styled.form`
  background: #f0f0f0;
  border: 1px solid #1a76c8;
  box-shadow: 0 2px 18px rgba(0, 0, 0, 0.4);
  font-size: 13px;
  left: 438px;
  padding-bottom: 12px;
  position: absolute;
  top: 90px;
  width: 424px;
`

const DialogTitle = styled.header`
  align-items: center;
  background: #fff;
  display: flex;
  font-size: 13px;
  gap: 5px;
  height: 30px;
  padding: 0 0 2px 8px;

  span {
    flex: 1;
  }
`

const Section = styled.div`
  border-bottom: ${props => props.$last ? '0' : '1px solid #a5a5a5'};
  display: flex;
  flex-direction: column;
  gap: 4px;
  padding: ${props => props.$pad};
`

const Field = styled.div`
  align-items: center;
  color: ${props => props.$off ? '#7f7f7f' : '#000'};
  column-gap: 8px;
  display: grid;
  grid-template-columns: 104px 248px 1fr;
  height: 19px;
  margin-bottom: ${props => props.$after || 0}px;

  > label {
    justify-self: end;
    line-height: 17px;
    outline: ${props => props.$focus ? '1px dotted #000' : 'none'};
    white-space: nowrap;
  }

  select, input {
    font-size: 12px;
  }
`

const PathBox = styled.div`
  background: #fff;
  border: 1px solid #a9a9a9;
  display: flex;
  height: 19px;
  padding: 1px 2px 1px 4px;

  input {
    background: ${BLUE};
    border: 0;
    color: #fff;
    min-width: 0;
    width: 240px;
  }
`

const Dots = styled.button`
  background: none;
  border: 0;
  justify-self: start;
  margin-left: 12px;
`

const Toggle = styled.label`
  align-items: center;
  color: ${props => props.$off ? '#838383' : '#000'};
  display: flex;
  gap: 7px;
  height: ${props => props.$radio ? 16 : 17}px;
  padding-left: ${props => props.$radio ? 13 : 114}px;

  input {
    appearance: none;
    background: #fff;
    border: 1px solid ${props => props.$off ? '#cccccc' : '#333'};
    border-radius: ${props => props.$radio ? '50%' : '0'};
    height: 13px;
    width: 13px;
  }

  input:checked {
    background: radial-gradient(circle, #333 0 3px, #fff 4px);
  }
`

const TimePick = styled.div`
  align-items: center;
  display: flex;
  padding-left: 3px;
`

const Split = styled.div`
  align-items: center;
  display: grid;
  grid-template-columns: 367px 1fr;
  height: 17px;
  margin-bottom: 4px;
`

const Actions = styled.div`
  display: flex;
  gap: 13px;
  justify-content: flex-end;
  padding: 11px 12px 0;

  button {
    background: #e1e1e1;
    border: 1px solid #adadad;
    height: 24px;
    width: 88px;
  }

  button:first-child {
    border: 2px solid ${BLUE};
  }
`

const ROWS = [
  ['shape', '外观', 'A', 'HDTV (1920 x 1080)'],
  ['xres', 'X 轴向分辨率', 'X', '1920', 'text'],
  ['yres', 'Y 轴向分辨率', 'Y', '1080', 'text'],
  ['view', '视图', 'V', '1'],
  ['gamma', 'Gamma', 'G', '1.70', 'text'],
  ['format', '格式', 'F', 'Windows BMP(B)'],
  ['zip', '压缩', 'C', '无(N)'],
  ['mode', '模式', 'M', '24 位色(B)'],
  ['render', '渲染模式', 'R', '从视图(光滑)'],
  ['renderSet', '渲染设置', '', 'Untitled', 'off'],
  ['light', '光线设置', '', '激活'],
  ['env', '环境设置', '', 'Untitled', 'off'],
  ['aa', '消锯齿', 'A', '无(N)']
]

const Caption = ({ text, hot, bare }) => (
  <>{text}{hot && <>(<u>{hot}</u>)</>}{!bare && ':'}</>
)

const DialogRow = ({ row: [id, text, hot, value, kind] }) => (
  <Field $off={kind === 'off'}>
    <label htmlFor={id}><Caption text={text} hot={hot} bare={id === 'render'} /></label>
    {kind === 'text'
      ? <TextBox id={id} defaultValue={value} />
      : <Drop $off={kind === 'off'}><select id={id} disabled={kind === 'off'}><option>{value}</option></select></Drop>}
  </Field>
)

const TimeRow = ({ id, text, hot, value, off, after }) => (
  <Field $off={off} $after={after}>
    <label htmlFor={id}><Caption text={text} hot={hot} /></label>
    <TextBox id={id} defaultValue={value} disabled={off} />
    <TimePick>
      <Icon w={16}><path d='M1 1h13v14H1z' fill='#f4f4f4' stroke='#c8c8c8' /><path d='M1 1h13v4H1z' fill='#b0b0b0' /><path d='M3 7h9v6H3zM6 7v6M9 7v6M3 10h9' stroke='#c0c0c0' /></Icon>
      <Caret color='#6a6a6a' w={18} />
    </TimePick>
  </Field>
)

const RecordDialog = () => (
  <Dialog onSubmit={e => e.preventDefault()}>
    <DialogTitle>
      <MuLogo />
      <span>录制脚本</span>
      <ToolButton type='button' aria-label='关闭' $w={31}><Icon w={10}><path d='m0 0 10 10m0-10L0 10' stroke='#000' strokeWidth='1.3' /></Icon></ToolButton>
    </DialogTitle>
    <Section $pad='13px 0 4px'>
      <Field $focus $after={3}>
        <label htmlFor='out'><Caption text='输出文件' hot='U' /></label>
        <PathBox><input id='out' defaultValue='orkSets\MetroStation\out\001总装135.bmp' /></PathBox>
        <Dots type='button' aria-label='浏览'>...</Dots>
      </Field>
      {ROWS.map(row => <DialogRow key={row[0]} row={row} />)}
    </Section>
    <Section $pad='4px 0 5px'>
      <Toggle $radio><input type='radio' name='range' defaultChecked />录制范围</Toggle>
      <TimeRow id='start' text='开始时间' hot='B' value='00' after={1} />
      <TimeRow id='end' text='结束时间' hot='E' value='300' />
      <Toggle $radio><input type='radio' name='range' />录制选择</Toggle>
      <TimeRow id='time' text='时间' hot='T' value='' off />
      <Toggle><input type='checkbox' /><span>隔行渲染(<u>F</u>)</span></Toggle>
      <Toggle $off><input type='checkbox' disabled /><span>奇数行优先(<u>O</u>)</span></Toggle>
      <Toggle $off><input type='checkbox' disabled /><span>动作模糊(<u>B</u>)</span></Toggle>
      <Toggle $off><input type='checkbox' disabled /><span>立体(<u>S</u>)</span></Toggle>
    </Section>
    <Section $last $pad='7px 0 0'>
      <Split>
        <Toggle $off><input type='checkbox' disabled />使用分布式渲染</Toggle>
        <Dots type='button' aria-label='分布式渲染选项'>...</Dots>
      </Split>
      <Toggle $off><input type='checkbox' disabled />包括此会话</Toggle>
      <Actions>
        <button type='submit'>确定(<u>O</u>)</button>
        <button type='button'>取消</button>
      </Actions>
    </Section>
  </Dialog>
)

const Cursor = styled.svg`
  left: 622px;
  pointer-events: none;
  position: absolute;
  top: 200px;
`

/* ---------- bottom bars ---------- */

const ModelDrop = styled(Drop)`
  align-items: center;
  background: #e1e1e1;
  border: 1px solid #adadad;
  height: 21px;
  margin: 0 2px;
  padding-left: 1px;
  width: 148px;

  select {
    background: none;
    border: 0;
    font-size: 12px;
    min-width: 0;
  }
`

const ViewToggles = styled.div`
  display: flex;
  margin-right: 2px;

  button {
    background: #f0f0f0;
    border: 1px solid #999;
    border-left-color: #fff;
    height: 20px;
    width: 16px;
  }

  button[aria-pressed='true'] {
    background: #7ab0e6;
    border-color: #2d68b0;
  }
`

const Axis = styled.label`
  align-items: center;
  border-right: ${props => props.$last ? '0' : '1px solid #a8a8a8'};
  display: flex;
  font-size: 15px;
  font-weight: 700;
  gap: 5px;
  height: 100%;
  padding: 0 6px;

  input {
    color: #777;
    font-size: 11px;
    font-weight: 400;
    width: 106px;
  }
`

const D = '#3a3a42'
const Node = ({ x, y, r = 2.5 }) => <circle cx={x} cy={y} r={r} fill='#fff' stroke={BLUE} strokeWidth='2' />

const SNAPS = [
  <g key='a' stroke={D} strokeWidth='2'><path d='m1 23 8-8h11V2' /><Node x={12} y={15} /></g>,
  <g key='a' stroke={D} strokeWidth='2'>
    <path d='M0 1h24M0 3h24M0 5h24M0 7h24M0 9h24M0 11h24M0 13h24M0 15h24M0 17h24M0 19h24M0 21h24M0 23h24' stroke='#2f5f95' strokeWidth='1' strokeDasharray='1 1' />
    <path d='m3 20 12-6 6-11' /><Node x={3} y={20} r={2} /><Node x={15} y={14} r={2} /><Node x={21} y={3} r={2} />
  </g>,
  <g key='a' stroke={D} strokeWidth='2'><path d='M1 23 23 2' /><Node x={12} y={12} /></g>,
  <g key='a' stroke={D} strokeWidth='2'><circle cx='12' cy='12' r='11' /><Node x={12} y={12} r={2} /></g>,
  <g key='a' stroke={D} strokeWidth='2'><circle cx='12' cy='12' r='7' /><path d='M12 0v5m0 14v5M0 12h5m14 0h5M3 3l4 4m10 10 4 4m0-18-4 4M7 17l-4 4' /><Node x={12} y={12} r={3} /></g>,
  <g key='a' stroke={D} strokeWidth='2'><path d='M5 23q-4-6 1-10 4-3 9 0 7-4 3-11' /><Node x={12} y={12} /></g>,
  <g key='a' stroke={D} strokeWidth='2'><path d='m1 2 22 21M20 3 4 20' /><Node x={12} y={13} /></g>,
  <path key='a' d='M0 12h24M1 23q1-10 11-11 10 1 11 11' stroke={D} strokeWidth='2' />,
  <g key='a' stroke={D} strokeWidth='2'><path d='M0 12h24M1 23q1-10 11-11 10 1 11 11' /><Node x={12} y={12} /></g>,
  <path key='a' d='M0 21h24M20 1v20M14 21v-5h6' stroke={D} strokeWidth='2' />,
  <g key='a' stroke={D} strokeWidth='2'><path d='M0 21h20V1M14 21v-5h6' /><Node x={20} y={21} /></g>,
  <g key='a' stroke='#aaa' strokeWidth='2'><path d='M5 9h18M2 16h21' /><circle cx='3' cy='9' r='2' fill='#fff' /></g>,
  <g key='a' stroke='#aaa' strokeWidth='2'><path d='m1 22 9-8h10V2M11 3v8' /><circle cx='11' cy='14' r='2' fill='#fff' /></g>
]

const FrameSnap = ({ bars }) => (
  <g stroke={D} strokeWidth='2'>
    <path d='M3 3h18v18H3z' />
    <Node x={3} y={3} r={2} /><Node x={21} y={3} r={2} /><Node x={3} y={21} r={2} /><Node x={21} y={21} r={2} /><Node x={12} y={12} r={2} />
    {bars && <path d={bars} stroke='#f0f0f0' strokeWidth='5' />}
    {bars && <path d={bars} />}
  </g>
)

const Stack = () => (
  <g><path d='M6 1h14v10H6z' fill='#fff' stroke={BLUE} strokeWidth='1.5' /><path d='M6 1h14v3H6z' fill={BLUE} /><path d='M1 8h12v9H1z' fill='#fff' stroke={BLUE} strokeWidth='1.5' /><path d='M1 8h12v3H1z' fill={BLUE} /></g>
)

const BottomBar = () => (
  <Band>
    <Strip $after={4} $end={2}>
      <Grip />
      <ToolButton aria-label='后退' $w={32} $h={28}><Icon w={24}><circle cx='12' cy='12' r='11.5' fill='#57b52b' stroke='#3c8a1c' /><path d='m3 12 9-8v5h8v6h-8v5z' fill='#fff' /></Icon></ToolButton>
      <Caret w={12} />
      <ToolButton aria-label='前进' $w={30} $h={28}><Icon w={24}><circle cx='12' cy='12' r='11.5' fill='#c5c5c5' stroke='#aaa' /><path d='m21 12-9-8v5H4v6h8v5z' fill='#f3f3f3' /></Icon></ToolButton>
      <Caret w={12} color='#888' />
      <ToolButton aria-label='模型' $w={32} $h={28}><Icon w={24}><ellipse cx='12' cy='17' rx='11' ry='5' fill='#8494a5' /><path d='M1 13v4h22v-4z' fill='#8494a5' /><ellipse cx='12' cy='13' rx='11' ry='5' fill='#b3bfcb' stroke='#74818f' /><path d='m3 2 10 10' stroke='#8a97a5' strokeWidth='3' /></Icon></ToolButton>
      <Caret w={12} />
      <ModelDrop>
        <Icon w={18} box='0 -1 21 21'><Stack /></Icon>
        <select aria-label='模型'><option>3D Metric Design Model</option></select>
      </ModelDrop>
      <Rule $gap={1} />
      <ToolButton aria-label='层叠' $w={32}><Icon w={24} h={22} box='0 0 21 19'><Stack /></Icon></ToolButton>
      <Rule $gap={1} />
      <ViewToggles>
        {[1, 2, 3, 4, 5, 6, 7, 8].map(n => <button key={n} aria-pressed={n < 4}>{n}</button>)}
      </ViewToggles>
    </Strip>
    <Strip $end={3}>
      <Grip />
      <ToolButton $active $w={28} $h={28} aria-label='精确捕捉'><Icon w={24}><path d='m4 4 16 16m0-16L4 20' stroke='#d9a73a' strokeWidth='6' /><path d='m4 4 16 16m0-16L4 20' stroke='#fbd260' strokeWidth='4' /></Icon></ToolButton>
      <Rule />
      {SNAPS.map((s, i) => <ToolButton key={i} $w={28} $h={28} $active={i === 1} aria-label={`捕捉 ${i + 1}`}><Icon w={24}>{s}</Icon></ToolButton>)}
      <Rule $gap={3} />
      {['', 'M16 15v9M20 15v9', 'M13 15v9M17 15v9M21 15v9'].map(b => (
        <ToolButton key={b} $w={28} $h={28} aria-label={`框选 ${b.length}`}><Icon w={24}><FrameSnap bars={b} /></Icon></ToolButton>
      ))}
    </Strip>
    <Strip>
      <Grip />
      <Axis>X <TextBox defaultValue='8198.570' /></Axis>
      <Axis>Y <TextBox defaultValue='52162.190' /></Axis>
      <Axis $last>Z <TextBox defaultValue='24926.128' /></Axis>
    </Strip>
  </Band>
)

const StatusBar = styled.footer`
  align-items: center;
  border-bottom: 2px solid #14141c;
  display: flex;
  font-size: 12px;
  height: 31px;
`

const Message = styled.output`
  font-size: 13px;
  padding-left: 3px;
  width: 476px;
`

const Cell = styled.div`
  align-items: center;
  border-left: 1px solid #6c6c6c;
  display: flex;
  height: 22px;
  justify-content: ${props => props.$text ? 'flex-start' : 'center'};
  padding-left: ${props => props.$text ? 4 : 0}px;
  width: ${props => props.$w || 30}px;
`

const Spacer = styled.span`
  flex: 1;
`

const Status = () => (
  <StatusBar>
    <Message>X 轴的图像分辨率</Message>
    <Grip /><Rule $h={28} />
    <Icon w={30} h={24}><path d='M25 2v20' stroke='#555' /><path d='m20 5 4-3v3z' fill='#000' /></Icon>
    <Spacer />
    <Cell $w={29}><Icon w={16}><path d='m2 14 9-3 3-9' stroke={BLUE} /><circle cx='2' cy='14' r='2' stroke={BLUE} fill='#fff' /><circle cx='14' cy='2' r='2' stroke={BLUE} fill='#fff' /><circle cx='10' cy='11' r='2' stroke={BLUE} fill='#fff' /></Icon></Cell>
    <Cell><Icon w={16}><path d='M5 7V4q0-3 3-3t3 3v3' stroke='#666' strokeWidth='2' /><path d='M2 7h12v7H2z' fill='#b3a01c' stroke='#6b6212' /></Icon></Cell>
    <Cell $text $w={133}>Default</Cell>
    <Cell $w={118} />
    <Cell /><Cell /><Cell />
    <Cell><Icon w={16}><path d='M3 1h11v4h-3v9q0 1-2 1H2v-4h3V5H3q-3-2 0-4zM11 5H5M9 11H5' stroke='#888' /></Icon></Cell>
    <Cell /><Cell />
    <Cell><Icon w={16}><path d='M2 1h9v14H2z' fill='#0a6cc8' /><path d='M1 3h2M1 7h2M1 11h2' stroke='#fff' /><circle cx='12' cy='11' r='3' fill='#fff' stroke='#0a6cc8' /><path d='M12 9v2h2M13 2h2v5h-2z' stroke='#0a6cc8' /></Icon></Cell>
    <Cell />
    <Cell $w={32}><Icon w={14}><path d='M1 1h11v9l-5 4H1z' fill='#e5e5e5' stroke='#aaa' /><path d='M4 3h6v5l-3 3-3-3z' stroke='#777' strokeWidth='1.5' /></Icon></Cell>
  </StatusBar>
)

const App = () => (
  <Window>
    <GlobalStyle />
    <AppTitleBar />
    <Ribbon />
    <AttributeStrip />
    <AnimationTimeline />
    <ViewWindow />
    <BottomBar />
    <Status />
    <Watermark><span>请求一块二向箔</span><b>bilibili</b></Watermark>
    <SelectPalette />
    <RecordDialog />
    <Cursor width='13' height='20' viewBox='0 0 13 20'><path d='M1 1v15l3-3 3 6 3-1-3-6h5z' fill='#fff' stroke='#000' /></Cursor>
  </Window>
)

export default App
